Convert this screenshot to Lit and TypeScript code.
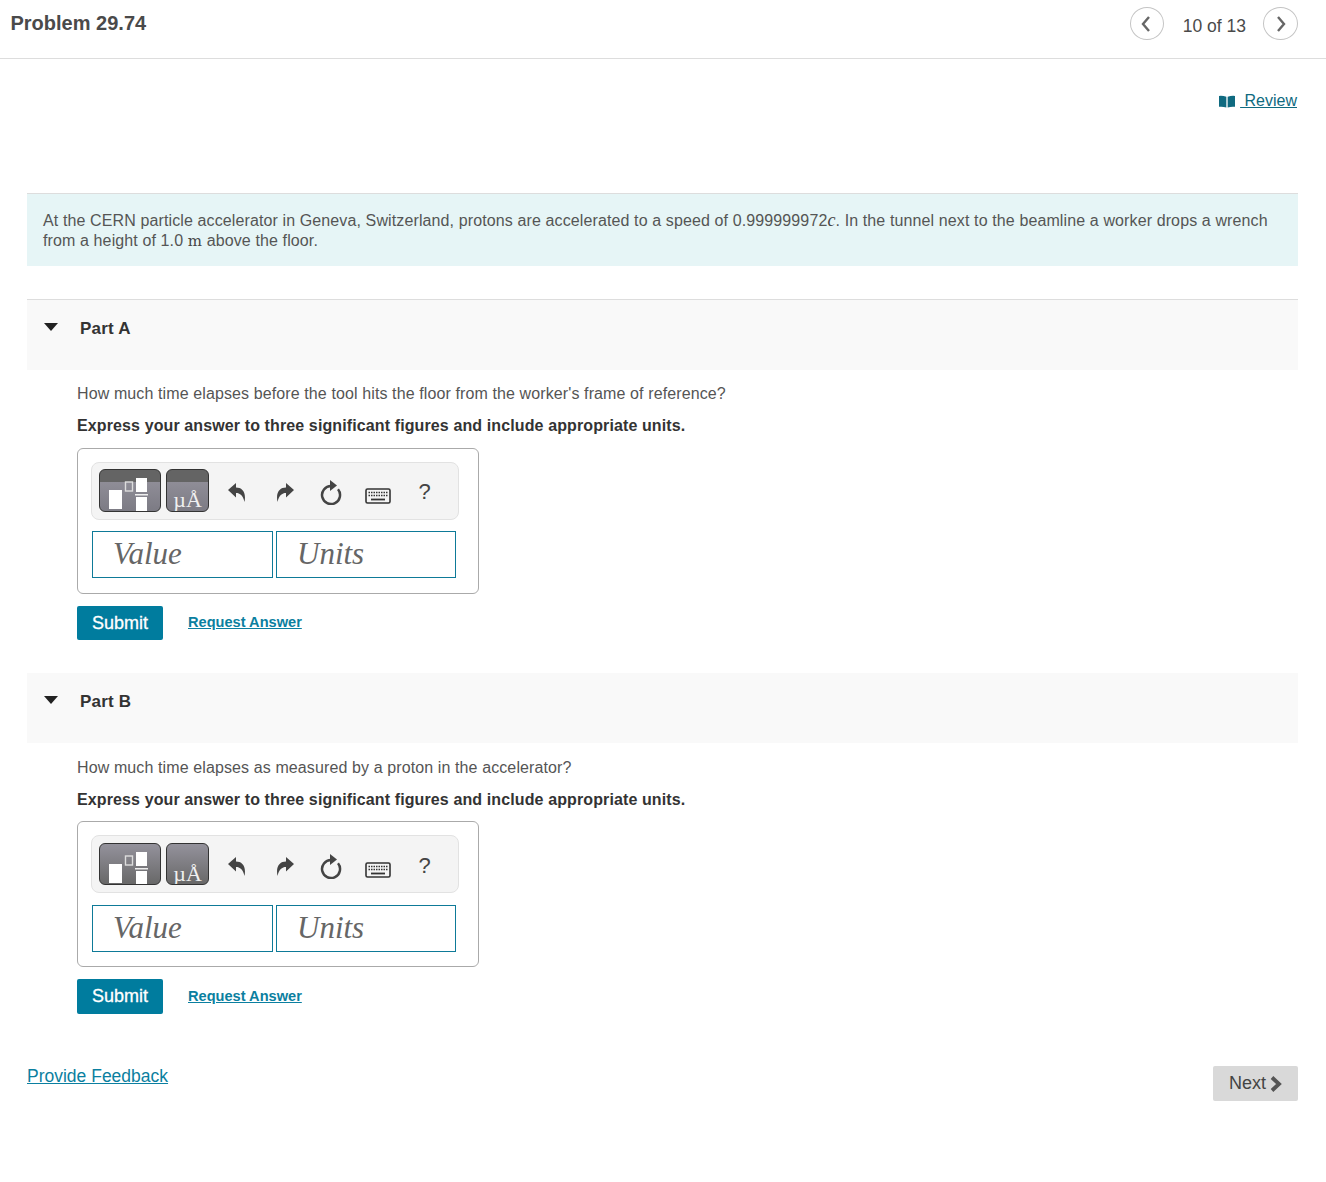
import { LitElement, html, css, svg } from 'lit';
import { customElement, property } from 'lit/decorators.js';
import { classMap } from 'lit/directives/class-map.js';

const chevronLeft = svg`<path d="M11 3 L5 10 L11 17" fill="none" stroke="#666" stroke-width="2.4"/>`;
const chevronRight = svg`<path d="M6 3 L12 10 L6 17" fill="none" stroke="#666" stroke-width="2.4"/>`;

@customElement('answer-part')
export class AnswerPart extends LitElement {
  static styles = css`
    :host {
      display: block;
    }
    .head {
      height: 70px;
      background: #f9f9f9;
      display: flex;
      align-items: flex-start;
      padding-top: 19px;
      box-sizing: border-box;
      gap: 22px;
      padding-left: 17px;
    }
    .caret {
      width: 0;
      height: 0;
      margin-top: 4px;
      border-left: 7px solid transparent;
      border-right: 7px solid transparent;
      border-top: 8px solid #222;
    }
    .title {
      font-size: 17px;
      font-weight: bold;
      line-height: 20px;
      letter-spacing: 0.2px;
      color: #333;
    }
    .body {
      padding: var(--body-top, 14px) 0 0 50px;
    }
    .question {
      font-size: 16px;
      line-height: 20px;
      letter-spacing: 0.11px;
      color: #555;
    }
    .instruction {
      margin-top: 12px;
      font-size: 16px;
      line-height: 20px;
      letter-spacing: 0.115px;
      font-weight: bold;
      color: #333;
    }
    .box {
      margin-top: var(--box-gap, 12px);
      width: 402px;
      height: 146px;
      box-sizing: border-box;
      border: 1px solid #aaa;
      border-radius: 6px;
      padding: 13px 0 0 13px;
    }
    .toolbar {
      width: 368px;
      height: 58px;
      box-sizing: border-box;
      background: #f4f4f4;
      border: 1px solid #e2e2e2;
      border-radius: 8px;
      display: flex;
      align-items: flex-start;
      padding: var(--toolbar-top, 6px) 0 0 7px;
    }
    .tpl {
      height: var(--tpl-height, 43px);
      box-sizing: border-box;
      border: 1px solid #333;
      border-radius: 6px;
      background: linear-gradient(#94929c, #686868);
      overflow: hidden;
      position: relative;
    }
    .tpl.active {
      background: linear-gradient(#646464 0 29%, #8f8d97 29%, #7c7b84 100%);
    }
    .tpl.frac {
      width: 62px;
    }
    .tpl.units {
      width: 43px;
      margin-left: 5px;
      margin-right: 4px;
      color: #f0f0f0;
      font-family: 'Liberation Serif', serif;
      font-size: 22px;
      line-height: 22px;
      text-align: center;
      padding-top: 19px;
    }
    .tpl svg {
      display: block;
    }
    .slot {
      width: 47px;
      height: 44px;
      margin-top: 1px;
      display: flex;
      align-items: center;
      justify-content: center;
      color: #444;
      font-size: 22px;
      line-height: 44px;
    }
    .redo {
      margin-left: 3px;
    }
    .keys {
      margin-top: 7px;
    }
    .inputs {
      display: flex;
      gap: 3px;
      margin: var(--inputs-gap, 11px) 0 0 1px;
    }
    .field {
      width: 181px;
      height: 47px;
      box-sizing: border-box;
      border: 1px solid #0e7a98;
      padding-left: 20px;
      font-family: 'Liberation Serif', serif;
      font-style: italic;
      font-size: 31px;
      line-height: 43px;
      color: #666;
    }
    .field + .field {
      width: 180px;
    }
    .actions {
      display: flex;
      align-items: center;
      gap: 25px;
      margin-top: 12px;
    }
    .submit {
      width: 86px;
      height: var(--submit-height, 34px);
      background: #007c9e;
      border-radius: 2px;
      color: #fff;
      font-size: 18px;
      line-height: 34px;
      text-align: center;
      -webkit-text-stroke: 0.3px #fff;
    }
    .request {
      font-size: 14.6px;
      font-weight: bold;
      color: #0b7fa0;
      text-decoration: underline;
      position: relative;
      top: -1px;
    }
  `;

  @property() label = '';
  @property() question = '';
  @property({ type: Boolean }) active = false;

  render() {
    const tpl = { tpl: true, active: this.active };
    return html`
      <div class="head">
        <div class="caret"></div>
        <div class="title">${this.label}</div>
      </div>
      <div class="body">
        <div class="question">${this.question}</div>
        <div class="instruction">Express your answer to three significant figures and include appropriate units.</div>
        <div class="box">
          <div class="toolbar">
            <div class="${classMap({ ...tpl, frac: true })}">
              <svg width="60" height="41" viewBox="0 0 60 41">
                <rect x="9" y="20" width="13" height="19" fill="#fff" />
                <rect x="25.5" y="12" width="7" height="9" fill="none" stroke="#ddd" stroke-width="1.4" />
                <rect x="36" y="8" width="11" height="14" fill="#fff" />
                <rect x="35" y="24" width="13" height="1.5" fill="#eee" />
                <rect x="36" y="27" width="11" height="14" fill="#fff" />
              </svg>
            </div>
            <div class="${classMap({ ...tpl, units: true })}">µÅ</div>
            <div class="slot">
              <svg width="18" height="20" viewBox="0 0 18 20">
                <path d="M0 8 L8 1 V5.500 C14 5.500 18.500 10 16.500 20 C15 13.500 12 11 8 11 V15.500 Z" fill="#444" />
              </svg>
            </div>
            <div class="slot">
              <svg class="redo" width="18" height="20" viewBox="0 0 18 20">
                <path d="M18 8 L10 1 V5.500 C4 5.500 -0.500 10 1.500 20 C3 13.500 6 11 10 11 V15.500 Z" fill="#444" />
              </svg>
            </div>
            <div class="slot">
              <svg width="22" height="25" viewBox="0 0 22 25">
                <path d="M11 6 A9 9 0 1 0 18 9.300" fill="none" stroke="#444" stroke-width="2.500" />
                <path d="M10 0 L17 5.500 L10 11 Z" fill="#444" />
              </svg>
            </div>
            <div class="slot">
              <svg class="keys" width="26" height="16" viewBox="0 0 26 16">
                <rect x="1" y="1" width="24" height="14" rx="1.500" fill="#f4f4f4" stroke="#333" stroke-width="1.600" />
                <path d="M3.500 4.500 H22.500 M3.500 7.500 H22.500" stroke="#333" stroke-width="1.500" stroke-dasharray="1.500 1" fill="none" />
                <path d="M6 11.500 H20" stroke="#333" stroke-width="1.800" fill="none" />
              </svg>
            </div>
            <div class="slot">?</div>
          </div>
          <div class="inputs">
            <div class="field">Value</div>
            <div class="field">Units</div>
          </div>
        </div>
        <div class="actions">
          <div class="submit">Submit</div>
          <a class="request">Request Answer</a>
        </div>
      </div>
    `;
  }
}

@customElement('app-root')
export class AppRoot extends LitElement {
  static styles = css`
    :host {
      display: block;
      min-height: 1182px;
      background: #fff;
      font-family: 'Liberation Sans', Arial, sans-serif;
    }
    header {
      height: 59px;
      box-sizing: border-box;
      border-bottom: 1px solid #ddd;
      display: flex;
      justify-content: space-between;
      padding: 7px 28px 0 10.500px;
    }
    h1 {
      margin: 4px 0 0;
      font-size: 20px;
      line-height: 24px;
      font-weight: bold;
      color: #4a4a4a;
    }
    .pager {
      display: flex;
      align-items: flex-start;
      font-size: 17.500px;
      line-height: 36px;
      color: #4a4a4a;
    }
    .circle {
      width: 34px;
      height: 33px;
      box-sizing: border-box;
      border: 1px solid #c4c4c4;
      border-radius: 50%;
      display: flex;
      align-items: center;
      justify-content: center;
    }
    .circle.right {
      width: 35px;
    }
    .count {
      margin: 1px 17px 0 19px;
    }
    .review-row {
      display: flex;
      justify-content: flex-end;
      padding: 32px 29px 0 0;
      height: 104px;
      box-sizing: border-box;
    }
    .review-row a {
      display: flex;
      align-items: center;
      height: 20px;
      font-size: 16px;
      color: #0f6a80;
      white-space: pre;
    }
    .review-row span {
      margin-left: 5px;
      text-decoration: underline;
    }
    .review-row svg {
      display: block;
    }
    main {
      padding: 30px 28px 0 27px;
    }
    .intro {
      border-top: 1px solid #ddd;
      background: #e6f5f6;
      padding: 16px 16px 15px;
      height: 73px;
      box-sizing: border-box;
      font-size: 16px;
      line-height: 20px;
      letter-spacing: 0.117px;
      color: #555;
    }
    .intro i {
      font-family: 'Liberation Serif', serif;
      font-size: 18px;
      color: #444;
    }
    .intro .unit {
      font-family: 'DejaVu Serif', serif;
      font-size: 15px;
      color: #444;
    }
    .part-a {
      margin-top: 33px;
      border-top: 1px solid #ddd;
    }
    .part-b {
      margin-top: 33px;
      --body-top: 15px;
      --box-gap: 11px;
      --toolbar-top: 7px;
      --tpl-height: 42px;
      --inputs-gap: 12px;
      --submit-height: 35px;
    }
    footer {
      display: flex;
      justify-content: space-between;
      align-items: flex-start;
      margin-top: 52px;
    }
    .feedback {
      font-size: 17.500px;
      line-height: 20px;
      color: #0b7fa0;
      text-decoration: underline;
    }
    .next {
      width: 85px;
      height: 35px;
      display: flex;
      align-items: center;
      justify-content: center;
      gap: 4px;
      background: #d9d9d9;
      border-radius: 2px;
      font-size: 18px;
      color: #444;
    }
  `;

  render() {
    return html`
      <header>
        <h1>Problem 29.74</h1>
        <div class="pager">
          <div class="circle"><svg width="17" height="20" viewBox="0 0 17 20">${chevronLeft}</svg></div>
          <div class="count">10 of 13</div>
          <div class="circle right"><svg width="17" height="20" viewBox="0 0 17 20">${chevronRight}</svg></div>
        </div>
      </header>
      <div class="review-row">
        <a>
          <svg width="16" height="13" viewBox="0 0 17 13">
            <path d="M0 0.600 Q4 0.200 7.800 1.500 V12.800 Q4 11.800 0 12.200 Z M9.200 1.500 Q13 0.200 17 0.600 V12.200 Q13 11.800 9.200 12.800 Z" fill="#0f6a80" />
          </svg>
          <span> Review</span>
        </a>
      </div>
      <main>
        <div class="intro">
          At the CERN particle accelerator in Geneva, Switzerland, protons are accelerated to a speed of 0.999999972<i>c</i>. In the tunnel next to the beamline a worker drops a wrench from a height of 1.0 <span class="unit">m</span> above the floor.
        </div>
        <answer-part
          class="part-a"
          active
          label="Part A"
          question="How much time elapses before the tool hits the floor from the worker's frame of reference?"
        ></answer-part>
        <answer-part
          class="part-b"
          label="Part B"
          question="How much time elapses as measured by a proton in the accelerator?"
        ></answer-part>
        <footer>
          <a class="feedback">Provide Feedback</a>
          <div class="next">
            Next
            <svg width="12" height="16" viewBox="0 0 12 16">
              <path d="M2 1.500 L9 8 L2 14.500" fill="none" stroke="#555" stroke-width="3.800" />
            </svg>
          </div>
        </footer>
      </main>
    `;
  }
}
